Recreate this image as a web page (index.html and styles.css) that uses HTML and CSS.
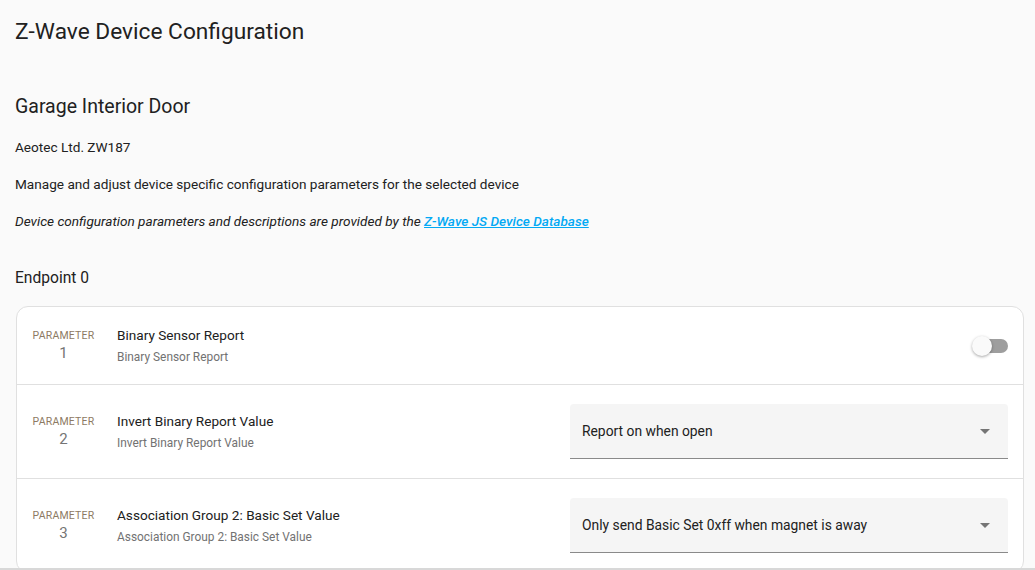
FILE: index.html
```html
<!DOCTYPE html>
<html>
<head>
<meta charset="utf-8">
<link rel="stylesheet" href="styles.css">
</head>
<body>
<div class="page">
  <h1 class="title">Z-Wave Device Configuration</h1>
  <h2 class="device">Garage Interior Door</h2>
  <p class="line">Aeotec Ltd. ZW187</p>
  <p class="line">Manage and adjust device specific configuration parameters for the selected device</p>
  <p class="line italic">Device configuration parameters and descriptions are provided by the <a class="link" href="#">Z-Wave JS Device Database</a></p>
  <h3 class="endpoint">Endpoint 0</h3>
  <div class="card">
    <div class="row row-first">
      <div class="param"><span class="plabel">PARAMETER</span><span class="pnum">1</span></div>
      <div class="info"><div class="name">Binary Sensor Report</div><div class="desc">Binary Sensor Report</div></div>
      <div class="toggle"><span class="track"></span><span class="thumb"></span></div>
    </div>
    <div class="row">
      <div class="param"><span class="plabel">PARAMETER</span><span class="pnum">2</span></div>
      <div class="info"><div class="name">Invert Binary Report Value</div><div class="desc">Invert Binary Report Value</div></div>
      <div class="select"><span class="value">Report on when open</span><span class="arrow"></span></div>
    </div>
    <div class="row">
      <div class="param"><span class="plabel">PARAMETER</span><span class="pnum">3</span></div>
      <div class="info"><div class="name">Association Group 2: Basic Set Value</div><div class="desc">Association Group 2: Basic Set Value</div></div>
      <div class="select"><span class="value">Only send Basic Set 0xff when magnet is away</span><span class="arrow"></span></div>
    </div>
  </div>
</div>
<div class="bottomline"></div>
</body>
</html>
```
FILE: styles.css
```css
html, body {
  margin: 0;
  padding: 0;
  background: #fafafa;
  font-family: Roboto, "Noto Sans", sans-serif;
  color: rgba(0,0,0,0.87);
  overflow: hidden;
  height: 570px;
}
.page {
  padding: 0 12px 0 15px;
}
.title {
  margin: 0;
  padding-top: 18px;
  font-size: 22.7px;
  font-weight: 400;
  line-height: 28px;
  color: #212121;
}
.device {
  margin: 48px 0 0;
  font-size: 19.5px;
  font-weight: 400;
  line-height: 26px;
  color: #212121;
}
.line {
  margin: 0;
  margin-top: 16px;
  font-size: 13.6px;
  line-height: 21px;
  color: #212121;
}
.device + .line { margin-top: 17px; }
.italic { font-style: italic; }
.link {
  color: #03a9f4;
  font-weight: 500;
  text-decoration: underline;
}
.endpoint {
  margin: 35px 0 0;
  font-size: 15.6px;
  font-weight: 400;
  line-height: 22px;
  color: #212121;
}
.card {
  margin-top: 17px;
  margin-left: 1px;
  background: #fff;
  border: 1px solid #e0e0e0;
  border-radius: 12px;
  width: 1006px;
}
.row {
  display: flex;
  align-items: center;
  padding: 19px 15px 19px 15px;
  border-top: 1px solid #e0e0e0;
}
.row-first {
  border-top: none;
  min-height: 77px;
  box-sizing: border-box;
  padding-top: 0;
  padding-bottom: 0;
}
.param {
  width: 63px;
  display: flex;
  flex-direction: column;
  align-items: center;
  margin-right: 22px;
}
.plabel {
  font-size: 10.5px;
  letter-spacing: 0.2px;
  color: #8d7a63;
  line-height: 13px;
}
.pnum {
  font-size: 15px;
  line-height: 18px;
  margin-top: 2px;
  color: #757575;
}
.info {
  flex: 1;
}
.name {
  font-size: 13.6px;
  line-height: 20px;
  color: #212121;
}
.desc {
  font-size: 11.9px;
  line-height: 18px;
  color: #727272;
  margin-top: 3px;
}
.toggle {
  position: relative;
  width: 36px;
  height: 20px;
  margin-right: 0;
}
.track {
  position: absolute;
  left: 3px;
  right: 0;
  top: 3px;
  height: 14px;
  border-radius: 7px;
  background: #9e9e9e;
}
.thumb {
  position: absolute;
  left: 0;
  top: 0;
  width: 20px;
  height: 20px;
  border-radius: 50%;
  background: #fafafa;
  box-shadow: 0 1px 3px rgba(0,0,0,0.35);
}
.select {
  width: 438px;
  height: 55px;
  box-sizing: border-box;
  background: #f5f5f5;
  border-radius: 4px 4px 0 0;
  border-bottom: 1px solid #8a8a8a;
  display: flex;
  align-items: center;
  padding: 0 18px 0 12px;
}
.value {
  flex: 1;
  font-size: 13.85px;
  color: #212121;
}
.arrow {
  width: 0;
  height: 0;
  border-left: 5px solid transparent;
  border-right: 5px solid transparent;
  border-top: 5px solid #757575;
}
.bottomline {
  position: fixed;
  left: 0;
  right: 0;
  bottom: 0;
  height: 2px;
  background: #d8d8d8;
}
```
